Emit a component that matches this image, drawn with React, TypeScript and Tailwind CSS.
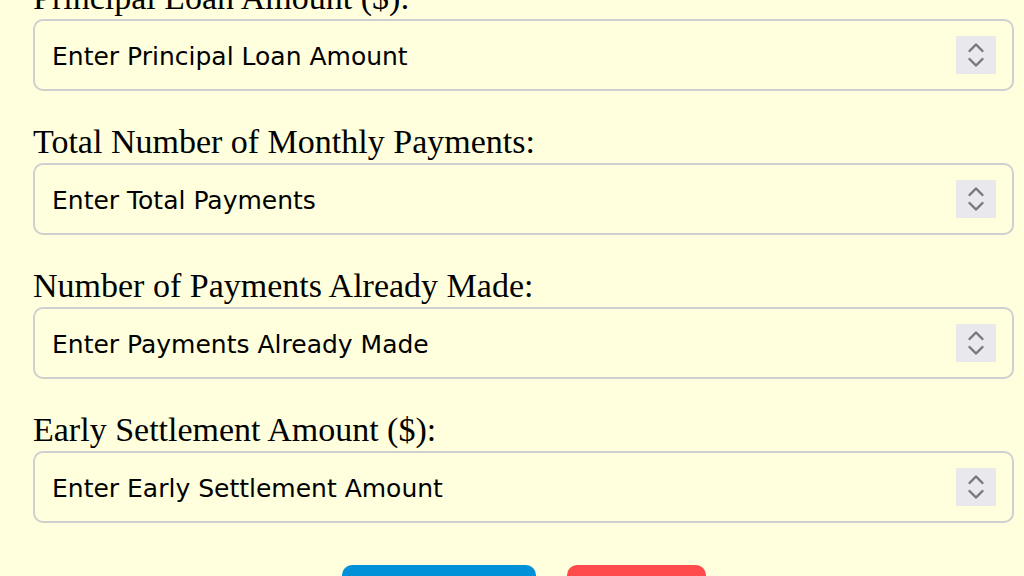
import React from 'react';

const fields = [
  { id: 'principal', label: 'Principal Loan Amount ($):', placeholder: 'Enter Principal Loan Amount' },
  { id: 'total', label: 'Total Number of Monthly Payments:', placeholder: 'Enter Total Payments' },
  { id: 'made', label: 'Number of Payments Already Made:', placeholder: 'Enter Payments Already Made' },
  { id: 'settlement', label: 'Early Settlement Amount ($):', placeholder: 'Enter Early Settlement Amount' },
];

function Spinner() {
  return (
    <div className="flex h-[38px] w-[40px] shrink-0 bg-[#e9e9ed]">
      <svg width="40" height="38" viewBox="0 0 40 38" fill="none" stroke="#787878" strokeWidth="2.4" strokeLinecap="round" strokeLinejoin="round">
        <path d="M13.5 15 L20 8.5 L26.5 15" />
        <path d="M13.5 23 L20 29.5 L26.5 23" />
      </svg>
    </div>
  );
}

export default function App() {
  return (
    <div className="min-h-[576px] overflow-hidden bg-[#ffffdd]">
      <div className="-mt-[18px] flex flex-col gap-[35px] pl-[33px] pr-[10px]">
        {fields.map((f) => (
          <div key={f.id}>
            <label
              htmlFor={f.id}
              className="mb-[6px] block text-[34px] leading-[31px] text-black"
              style={{ fontFamily: '"Liberation Serif", "Times New Roman", serif' }}
            >
              {f.label}
            </label>
            <div className="flex h-[72px] items-center rounded-[10px] border-2 border-[#cfcfcf] bg-[#ffffdd] pl-[17px] pr-[16px]">
              <input
                id={f.id}
                type="text"
                placeholder={f.placeholder}
                className="mt-[3px] min-w-0 flex-1 bg-transparent text-[25px] text-black outline-none placeholder:text-black"
                style={{ fontFamily: '"DejaVu Sans", Verdana, sans-serif' }}
              />
              <Spinner />
            </div>
          </div>
        ))}
        <div className="mt-[7px] flex justify-center gap-[31px]">
          <button className="h-[60px] w-[194px] rounded-[10px] bg-[#0091d9] text-[25px] text-white">Calculate</button>
          <button className="h-[60px] w-[139px] rounded-[10px] bg-[#ff4b4b] text-[25px] text-white">Reset</button>
        </div>
      </div>
    </div>
  );
}
